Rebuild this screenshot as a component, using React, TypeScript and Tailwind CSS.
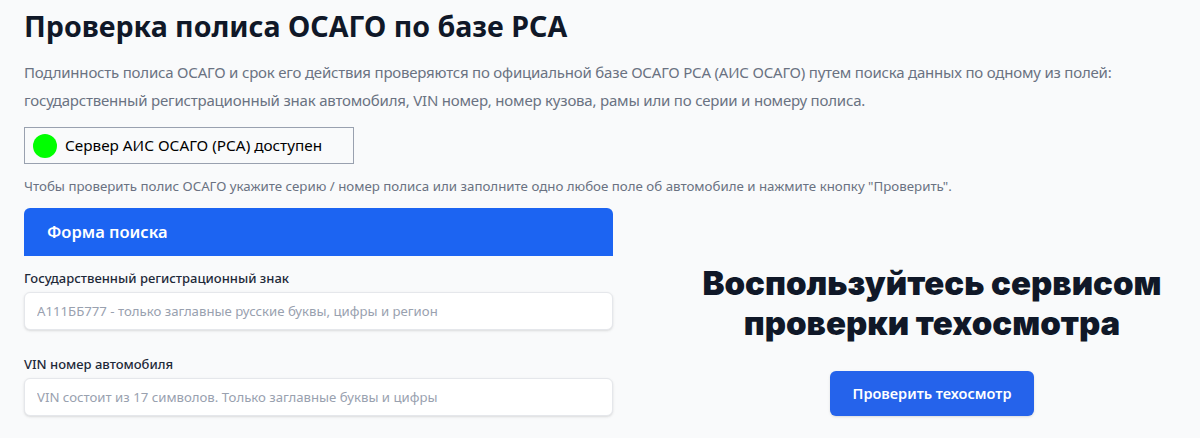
import React from 'react';

const font = { fontFamily: '"Noto Sans", "Open Sans", sans-serif' };

function Field({ label, placeholder, top }: { label: string; placeholder: string; top: string }) {
  return (
    <div className={top}>
      <label className="block text-[13px] leading-[20px] font-medium text-gray-800 mb-[4px]">{label}</label>
      <input
        className="w-full h-[38px] px-3 rounded-md border border-gray-200 bg-white shadow-sm text-[13.2px] text-gray-700 placeholder:text-gray-400 outline-none"
        placeholder={placeholder}
      />
    </div>
  );
}

export default function App() {
  return (
    <div className="w-[1200px] h-[438px] overflow-hidden bg-gray-50 px-6 pt-[6px]" style={font}>
      <h1 className="text-[28.6px] leading-[40px] font-bold text-gray-900">Проверка полиса ОСАГО по базе РСА</h1>
      <p className="mt-[12px] text-[15px] leading-[28px] tracking-[-0.2px] text-gray-500">
        Подлинность полиса ОСАГО и срок его действия проверяются по официальной базе ОСАГО РСА (АИС ОСАГО) путем поиска данных по одному из полей: государственный регистрационный знак автомобиля, VIN номер, номер кузова, рамы или по серии и номеру полиса.
      </p>
      <div className="mt-[13px] w-[330px] h-[37px] flex items-center gap-2 px-2 border border-gray-400">
        <span className="w-6 h-6 rounded-full bg-[#00ff00]" />
        <span className="text-[15.3px] text-black">Сервер АИС ОСАГО (РСА) доступен</span>
      </div>
      <p className="mt-[13px] text-[13.3px] leading-[18px] text-gray-500">
        Чтобы проверить полис ОСАГО укажите серию / номер полиса или заполните одно любое поле об автомобиле и нажмите кнопку "Проверить".
      </p>
      <div className="mt-[13px] flex gap-[75px]">
        <div className="w-[589px] shrink-0">
          <div className="h-[48px] flex items-center px-[23px] bg-[#1c64f2] rounded-t-md">
            <span className="text-[16.5px] font-semibold text-white">Форма поиска</span>
          </div>
          <Field top="mt-[12px]" label="Государственный регистрационный знак" placeholder="А111ББ777 - только заглавные русские буквы, цифры и регион" />
          <Field top="mt-[24px]" label="VIN номер автомобиля" placeholder="VIN состоит из 17 символов. Только заглавные буквы и цифры" />
        </div>
        <div className="flex-1 flex flex-col items-center pt-[55px]">
          <h2 className="text-center text-[33px] leading-[40px] font-black text-gray-900" style={{ fontFamily: 'Inter, sans-serif' }}>
            Воспользуйтесь сервисом
            <br />
            проверки техосмотра
          </h2>
          <button className="mt-[28px] h-[45px] w-[204px] rounded-md bg-[#2563eb] text-white text-[14.5px] font-semibold shadow-sm">
            Проверить техосмотр
          </button>
        </div>
      </div>
    </div>
  );
}
